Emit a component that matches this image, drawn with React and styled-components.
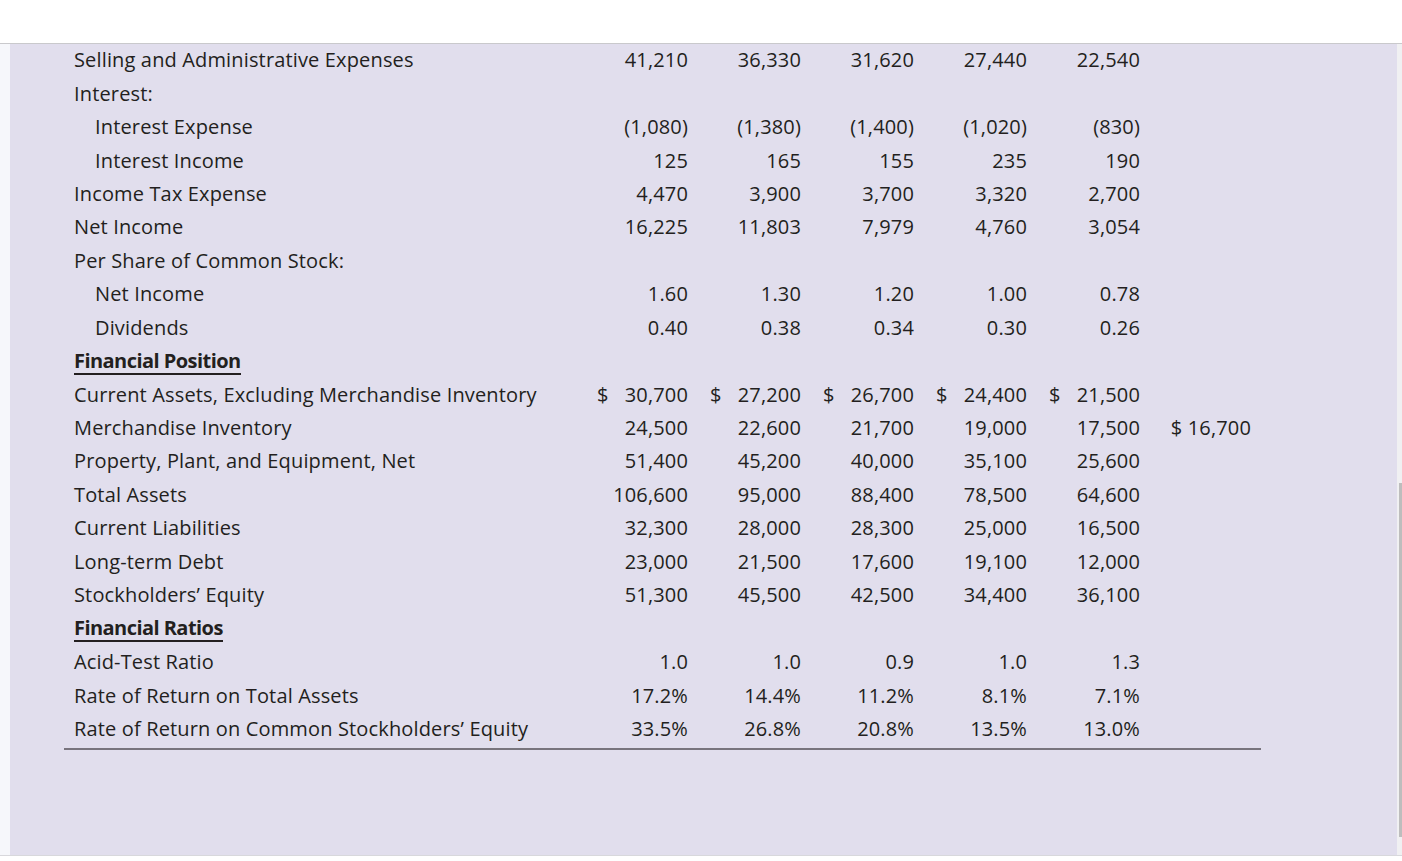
import React from "react";
import styled, { createGlobalStyle } from "styled-components";

const Global = createGlobalStyle`
  html, body { margin: 0; padding: 0; background: #ffffff; }
  body { font-family: "Open Sans", "Noto Sans", sans-serif; color: #231f20; }
`;

const Page = styled.div`
  width: 1402px;
  height: 861px;
  display: flex;
  flex-direction: column;
  overflow: hidden;
  background: #ffffff;
`;

const TopBar = styled.div`
  height: 43px;
  flex: none;
  background: #ffffff;
  border-bottom: 1px solid #c9c9cc;
`;

const Viewport = styled.div`
  height: 811px;
  flex: none;
  display: flex;
  border-bottom: 1px solid #d8d8dc;
`;

const Gutter = styled.div`
  width: 10px;
  flex: none;
  background: #f6f7fb;
`;

const Panel = styled.div`
  flex: 1;
  background: #e1deed;
  padding: 0 0 0 54px;
`;

const Track = styled.div`
  width: 5px;
  flex: none;
  background: #f0f0f2;
  display: flex;
  flex-direction: column;
  padding-top: 439px;
  padding-left: 2px;
  box-sizing: border-box;
`;

const Thumb = styled.div`
  width: 3px;
  height: 354px;
  background: #bdbdbd;
`;

const Table = styled.div`
  width: 1197px;
  display: grid;
  grid-template-columns: 521px repeat(5, 113px) 111px;
  grid-auto-rows: 33.45px;
  margin-top: -1px;
  border-bottom: 2px solid #78747d;
  padding-bottom: 3px;
  font-size: 20px;
  letter-spacing: 0.15px;
`;

const Label = styled.div`
  display: flex;
  align-items: center;
  padding-left: ${(p) => (p.$indent ? 31 : 10)}px;
  white-space: nowrap;
`;

const Heading = styled.span`
  font-weight: 700;
  letter-spacing: -0.55px;
  border-bottom: 2px solid #231f20;
  line-height: 22px;
  padding-bottom: 1px;
  margin-top: 3px;
`;

const Cell = styled.div`
  display: flex;
  align-items: center;
  justify-content: space-between;
  padding: 0 10px 0 12px;
  white-space: nowrap;
`;

const Dollar = styled.span`
  visibility: ${(p) => (p.$show ? "visible" : "hidden")};
`;

const Num = styled.span`
  margin-left: auto;
`;

const rows = [
  { label: "Selling and Administrative Expenses", v: ["41,210", "36,330", "31,620", "27,440", "22,540"] },
  { label: "Interest:" },
  { label: "Interest Expense", indent: true, v: ["(1,080)", "(1,380)", "(1,400)", "(1,020)", "(830)"] },
  { label: "Interest Income", indent: true, v: ["125", "165", "155", "235", "190"] },
  { label: "Income Tax Expense", v: ["4,470", "3,900", "3,700", "3,320", "2,700"] },
  { label: "Net Income", v: ["16,225", "11,803", "7,979", "4,760", "3,054"] },
  { label: "Per Share of Common Stock:" },
  { label: "Net Income", indent: true, v: ["1.60", "1.30", "1.20", "1.00", "0.78"] },
  { label: "Dividends", indent: true, v: ["0.40", "0.38", "0.34", "0.30", "0.26"] },
  { label: "Financial Position", heading: true },
  { label: "Current Assets, Excluding Merchandise Inventory", v: ["30,700", "27,200", "26,700", "24,400", "21,500"], dollar: true },
  { label: "Merchandise Inventory", v: ["24,500", "22,600", "21,700", "19,000", "17,500"], extra: "$ 16,700" },
  { label: "Property, Plant, and Equipment, Net", v: ["51,400", "45,200", "40,000", "35,100", "25,600"] },
  { label: "Total Assets", v: ["106,600", "95,000", "88,400", "78,500", "64,600"] },
  { label: "Current Liabilities", v: ["32,300", "28,000", "28,300", "25,000", "16,500"] },
  { label: "Long-term Debt", v: ["23,000", "21,500", "17,600", "19,100", "12,000"] },
  { label: "Stockholders’ Equity", v: ["51,300", "45,500", "42,500", "34,400", "36,100"] },
  { label: "Financial Ratios", heading: true },
  { label: "Acid-Test Ratio", v: ["1.0", "1.0", "0.9", "1.0", "1.3"] },
  { label: "Rate of Return on Total Assets", v: ["17.2%", "14.4%", "11.2%", "8.1%", "7.1%"] },
  { label: "Rate of Return on Common Stockholders’ Equity", v: ["33.5%", "26.8%", "20.8%", "13.5%", "13.0%"] },
];

export default function App() {
  return (
    <>
      <Global />
      <Page>
        <TopBar />
        <Viewport>
          <Gutter />
          <Panel>
            <Table>
              {rows.map((r, i) => (
                <React.Fragment key={i}>
                  <Label $indent={r.indent}>
                    {r.heading ? <Heading>{r.label}</Heading> : r.label}
                  </Label>
                  {[0, 1, 2, 3, 4].map((c) => (
                    <Cell key={c}>
                      {r.v && (
                        <>
                          <Dollar $show={r.dollar}>$</Dollar>
                          <Num>{r.v[c]}</Num>
                        </>
                      )}
                    </Cell>
                  ))}
                  <Cell>{r.extra && <Num>{r.extra}</Num>}</Cell>
                </React.Fragment>
              ))}
            </Table>
          </Panel>
          <Track>
            <Thumb />
          </Track>
        </Viewport>
      </Page>
    </>
  );
}
